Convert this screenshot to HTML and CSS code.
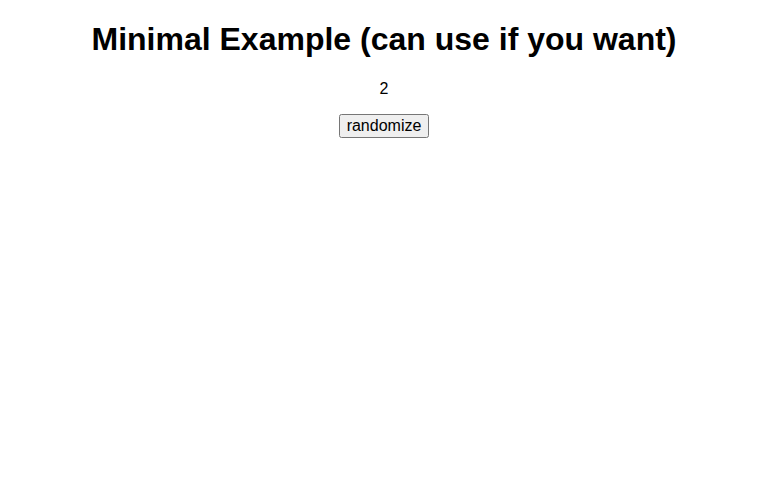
FILE: index.html
```html
<!DOCTYPE html>
<html>
<head>
<meta charset="utf-8">
<link rel="stylesheet" href="styles.css">
</head>
<body class="page">
<div class="app">
<h1 class="title">Minimal Example (can use if you want)</h1>
<p class="value">2</p>
<div class="actions"><button class="btn">randomize</button></div>
</div>
</body>
</html>
```
FILE: styles.css
```css
.page {
  margin: 0;
  font-family: "Liberation Sans", Arial, sans-serif;
  background: #fff;
  color: #000;
}
.app {
  text-align: center;
}
.title {
  font-size: 32px;
  font-weight: bold;
}
.value {
  font-size: 16px;
}
.btn {
  font-family: "Liberation Sans", Arial, sans-serif;
  font-size: 16px;
}
```
